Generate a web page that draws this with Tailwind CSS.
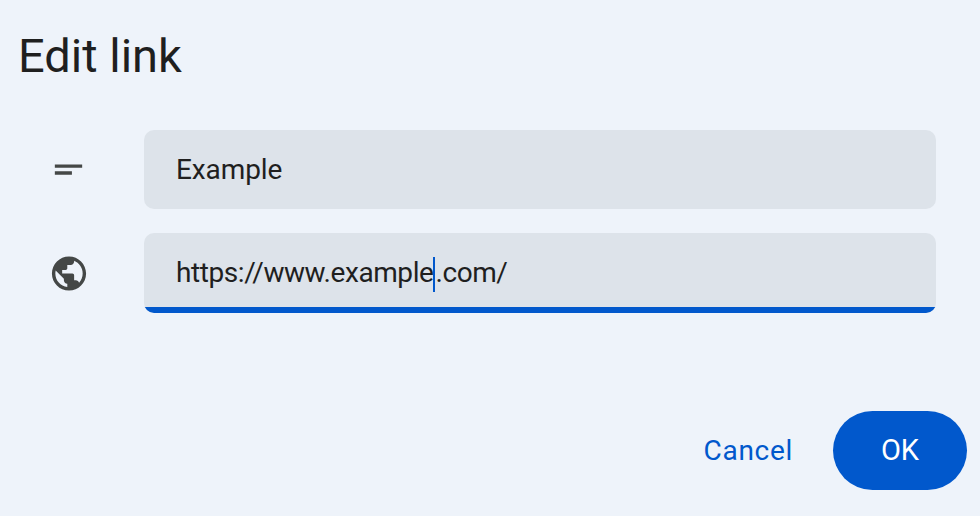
<!DOCTYPE html>
<html lang="en">
<head>
    <meta charset="UTF-8">
    <title>Edit link</title>
    <script src="https://cdn.jsdelivr.net/npm/@tailwindcss/browser@4"></script>
</head>
<body class="bg-[#eef3fa] overflow-hidden font-['Roboto',sans-serif]">
    <div class="w-[980px] h-[516px] flex flex-col">
        <h1 class="pl-[18px] pt-[26px] h-[130px] text-[47px] leading-[60px] text-[#1f1f1f]">Edit link</h1>

        <div class="flex items-center h-[79px] pl-[48px] pr-[44px]">
            <svg class="w-[41px] h-[41px] shrink-0" viewBox="0 0 24 24" fill="#444746"><path d="M4 9h16v2H4zm0 4h10v2H4z"/></svg>
            <div class="ml-[55px] flex-1 h-full flex items-center pl-[32px] bg-[#dde3ea] rounded-[10px] text-[28px] tracking-[-0.1px] text-[#1f1f1f]">Example</div>
        </div>

        <div class="flex items-center h-[80px] mt-[24px] pl-[48px] pr-[44px]">
            <svg class="w-[41px] h-[41px] shrink-0 translate-x-[0.5px]" viewBox="0 0 24 24" fill="#444746"><path d="M12 2C6.48 2 2 6.48 2 12s4.48 10 10 10 10-4.48 10-10S17.52 2 12 2zm-1 17.93c-3.95-.49-7-3.85-7-7.93 0-.62.08-1.21.21-1.79L9 15v1c0 1.1.9 2 2 2v1.93zm6.9-2.54c-.26-.81-1-1.39-1.9-1.39h-1v-3c0-.55-.45-1-1-1H8v-2h2c.55 0 1-.45 1-1V7h2c1.1 0 2-.9 2-2v-.41c2.93 1.19 5 4.06 5 7.41 0 2.08-.8 3.97-2.1 5.39z"/></svg>
            <div class="ml-[55px] flex-1 h-full flex flex-col bg-[#dde3ea] rounded-[10px] overflow-hidden text-[28px] tracking-[-0.42px] text-[#1f1f1f]">
                <div class="flex-1 flex items-center pl-[32px] pt-[5px]">
                    <span>https://www.example<span class="inline-block w-0 h-[35px] align-middle border-l-2 border-[#0158cc]"></span>.com/</span>
                </div>
                <div class="h-[6px] bg-[#0158cc]"></div>
            </div>
        </div>

        <div class="flex items-center justify-end mt-[98px] pr-[13px]">
            <button class="text-[28px] tracking-[0.7px] text-[#0158cc] mr-[40px]">Cancel</button>
            <button class="w-[134px] h-[79px] rounded-full bg-[#0158cc] text-[29px] text-white">OK</button>
        </div>
    </div>
</body>
</html>
